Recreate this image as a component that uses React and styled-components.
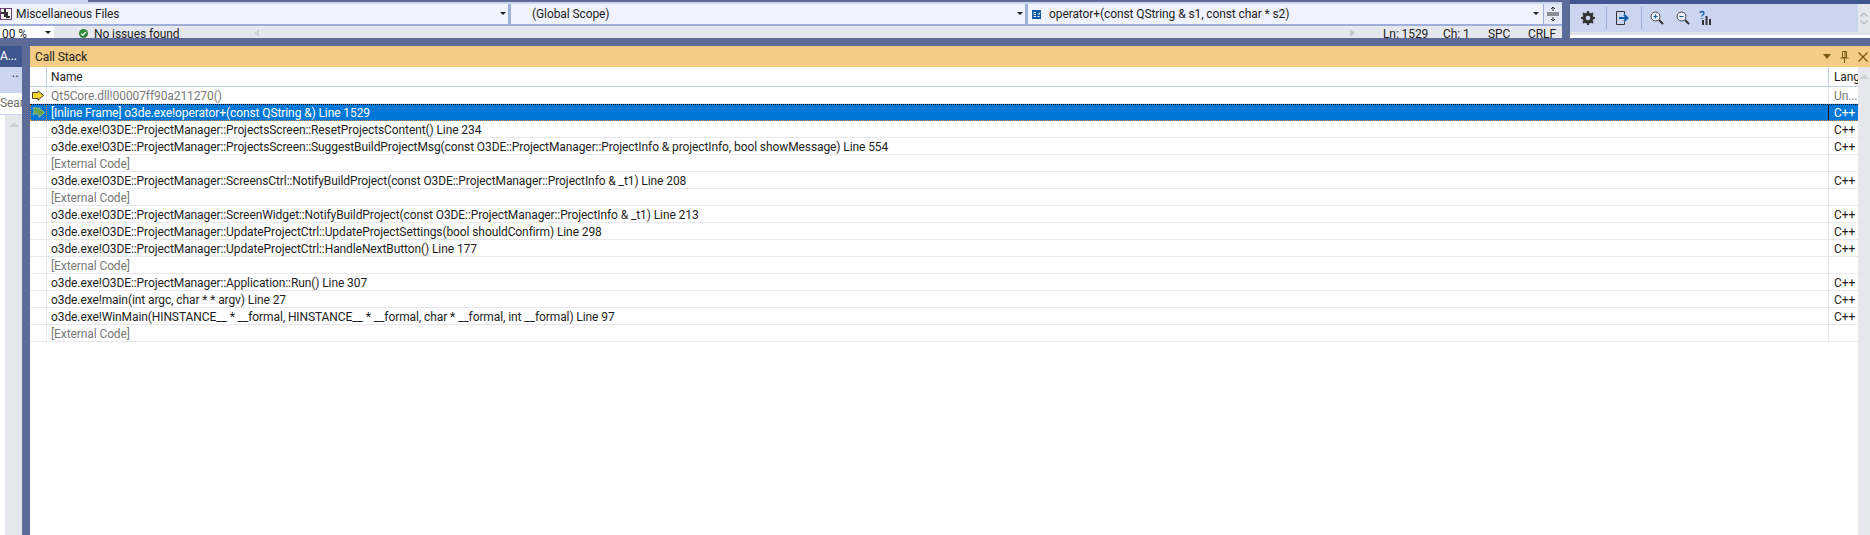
import React from 'react';
import styled, { createGlobalStyle } from 'styled-components';

const GlobalStyle = createGlobalStyle`
  html, body {
    margin: 0;
    padding: 0;
    width: 1870px;
    height: 535px;
    overflow: hidden;
    background: #5d6b99;
    font-family: Roboto, "Open Sans", sans-serif;
    font-size: 12px;
    letter-spacing: -0.095px;
    color: #1e1e1e;
  }
`;

const Page = styled.div`
  display: flex;
  flex-direction: column;
  width: 1870px;
  height: 535px;
`;

const Top = styled.div`
  display: flex;
  height: 38px;
  flex: none;
  background: #5d6b99;
`;

const EditorChrome = styled.div`
  width: 1562px;
  flex: none;
  display: flex;
  flex-direction: column;
`;

const TabStrip = styled.div`
  height: 2px;
  display: flex;
  flex: none;
`;

const ActiveTab = styled.div`
  width: 88px;
  background: #ccd5f0;
`;

const NavBar = styled.div`
  height: 24px;
  flex: none;
  box-sizing: border-box;
  background: #f0f3fd;
  border-top: 2px solid #ccd5f0;
  border-bottom: 2px solid #9fb0d8;
  display: flex;
`;

const NavCell = styled.div`
  width: ${p => p.$w}px;
  flex: none;
  display: flex;
  align-items: center;
  gap: ${p => p.$gap || 8}px;
  padding-left: ${p => p.$pad}px;
  box-sizing: border-box;
  position: relative;
  border-right: ${p => p.$rule || 3}px solid #9fb0d8;
`;

const Splitter = styled.div`
  flex: 1;
  display: flex;
  align-items: center;
  justify-content: center;
  background: #e4e9f8;
`;

const Arrow = styled.span`
  position: absolute;
  right: ${p => p.$right || 2}px;
  top: ${p => p.$top || 8}px;
  border-left: 3px solid transparent;
  border-right: 3px solid transparent;
  border-top: 3px solid #1e1e1e;
`;

const Status = styled.div`
  height: 12px;
  flex: none;
  background: #e6e7ec;
  display: flex;
  overflow: hidden;
  line-height: 16px;
`;

const ZoomBox = styled.div`
  width: 54px;
  background: #fff;
  position: relative;
  flex: none;
  padding-left: 2px;
  box-sizing: border-box;
`;

const Issues = styled.div`
  display: flex;
  gap: 6px;
  margin-left: 25px;
  width: 175px;
  flex: none;
  svg { margin-top: 3px; }
`;

const HBarLeft = styled.span`
  flex: none;
  margin-top: 3px;
  height: 0;
  border-top: 4px solid transparent;
  border-bottom: 4px solid transparent;
  border-right: 5px solid #d0d0d6;
`;

const HBarRight = styled.span`
  flex: none;
  margin: 3px 28px 0 1091px;
  height: 0;
  border-top: 4px solid transparent;
  border-bottom: 4px solid transparent;
  border-left: 5px solid #c4c4cc;
`;

const CaretInfo = styled.span`
  flex: none;
  width: ${p => p.$w}px;
`;

const RightToolbar = styled.div`
  width: 300px;
  margin-left: 8px;
  flex: none;
  display: flex;
  flex-direction: column;
`;

const ToolTop = styled.div`
  height: 4px;
  flex: none;
  background: #40568f;
`;

const ToolRow = styled.div`
  height: 28px;
  flex: none;
  background: #ccd5f0;
  display: flex;
  align-items: center;
  padding-left: 10px;
`;

const ToolIcon = styled.span`
  display: flex;
  flex: none;
  margin-right: ${p => p.$mr}px;
`;

const ToolSep = styled.div`
  width: 1px;
  height: 22px;
  flex: none;
  background: #9fb0d8;
  margin-right: ${p => p.$mr}px;
`;

const ToolScroll = styled.div`
  width: 12px;
  height: 28px;
  flex: none;
  margin-left: auto;
  background: #e6e7ec;
  display: flex;
  flex-direction: column;
  align-items: center;
  justify-content: center;
  gap: 3px;
`;

const ToolFoot = styled.div`
  height: 3px;
  flex: none;
  background: #e0e1e8;
`;

const ToolWhite = styled.div`
  flex: 1;
  background: #fff;
`;

const Main = styled.div`
  display: flex;
  flex: 1;
  padding-top: 8px;
  min-height: 0;
`;

const SidePanel = styled.div`
  width: 22px;
  flex: none;
  display: flex;
  flex-direction: column;
  background: #fff;
  overflow: hidden;
`;

const SideTitle = styled.div`
  height: 21px;
  flex: none;
  background: #40568f;
  color: #fff;
  line-height: 21px;
  position: relative;
`;

const SideTool = styled.div`
  height: 26px;
  flex: none;
  background: #ccd5f0;
  display: flex;
  justify-content: flex-end;
  padding: 7px 3px 0 0;
  box-sizing: border-box;
  font-size: 7px;
  line-height: 7px;
  letter-spacing: 1px;
`;

const SideSearch = styled.div`
  height: 22px;
  flex: none;
  line-height: 21px;
  color: #6d6d6d;
  background: #fff;
  border-bottom: 1px solid #ccd5f0;
  box-sizing: border-box;
  white-space: nowrap;
  overflow: hidden;
`;

const SideTrack = styled.div`
  flex: 1;
  background: #e6e7ec;
  margin-left: 5px;
  display: flex;
  justify-content: center;
  padding-top: 7px;
`;

const UpTri = styled.span`
  height: 0;
  border-left: 5px solid transparent;
  border-right: 5px solid transparent;
  border-bottom: 5px solid #cfd0d6;
`;

const Panel = styled.div`
  flex: 1;
  margin-left: 8px;
  display: flex;
  flex-direction: column;
  background: #fff;
  min-width: 0;
`;

const PanelHeader = styled.div`
  height: 21px;
  flex: none;
  background: #f5cc84;
  display: flex;
  align-items: center;
  padding: 0 0 0 5px;
  justify-content: space-between;
`;

const PanelButtons = styled.div`
  display: flex;
  align-items: center;
  gap: 9px;
  padding-right: 2px;
`;

const Body = styled.div`
  flex: 1;
  display: flex;
  min-height: 0;
`;

const Grid = styled.div`
  flex: 1;
  min-width: 0;
`;

const Scroll = styled.div`
  width: 12px;
  flex: none;
  background: #e6e7ec;
  display: flex;
  justify-content: center;
  padding-top: 7px;
  box-sizing: border-box;
`;

const Row = styled.div`
  display: grid;
  grid-template-columns: 17px 1fr 30px;
  height: ${p => (p.$head ? 20 : 17)}px;
  line-height: ${p => (p.$head ? 20 : 18)}px;
  box-sizing: border-box;
  border-bottom: 1px solid ${p => (p.$head ? '#c3cfe9' : '#e8e8ee')};
  color: ${p => (p.$dim ? '#7a7a7a' : '#1e1e1e')};
`;

const SelectedRow = styled(Row)`
  background: #0078d7;
  color: #fff;
  line-height: 16px;
  border-top: 1px dotted #111;
  border-bottom: 1px dotted #f08a24;
`;

const Gutter = styled.div`
  display: flex;
  align-items: center;
  justify-content: center;
  border-right: 1px solid ${p => (p.$head ? '#c3cfe9' : '#e8e8ee')};
  svg { flex: none; }
`;

const SelectedGutter = styled(Gutter)`
  border-left: 1px dotted #f08a24;
  border-right: 1px dotted #f08a24;
`;

const NameCell = styled.div`
  padding-left: 4px;
  white-space: nowrap;
  overflow: hidden;
`;

const LangCell = styled.div`
  padding-left: 5px;
  white-space: nowrap;
  overflow: hidden;
  border-left: 1px solid ${p => (p.$head ? '#c3cfe9' : '#e8e8ee')};
`;

const SelectedLang = styled(LangCell)`
  border-left-color: #111;
`;

const frames = [
  { name: 'Qt5Core.dll!00007ff90a211270()', lang: 'Un...', dim: true, mark: 'current' },
  { name: 'o3de.exe!O3DE::ProjectManager::ProjectsScreen::ResetProjectsContent() Line 234', lang: 'C++' },
  { name: 'o3de.exe!O3DE::ProjectManager::ProjectsScreen::SuggestBuildProjectMsg(const O3DE::ProjectManager::ProjectInfo & projectInfo, bool showMessage) Line 554', lang: 'C++' },
  { name: '[External Code]', dim: true },
  { name: 'o3de.exe!O3DE::ProjectManager::ScreensCtrl::NotifyBuildProject(const O3DE::ProjectManager::ProjectInfo & _t1) Line 208', lang: 'C++' },
  { name: '[External Code]', dim: true },
  { name: 'o3de.exe!O3DE::ProjectManager::ScreenWidget::NotifyBuildProject(const O3DE::ProjectManager::ProjectInfo & _t1) Line 213', lang: 'C++' },
  { name: 'o3de.exe!O3DE::ProjectManager::UpdateProjectCtrl::UpdateProjectSettings(bool shouldConfirm) Line 298', lang: 'C++' },
  { name: 'o3de.exe!O3DE::ProjectManager::UpdateProjectCtrl::HandleNextButton() Line 177', lang: 'C++' },
  { name: '[External Code]', dim: true },
  { name: 'o3de.exe!O3DE::ProjectManager::Application::Run() Line 307', lang: 'C++' },
  { name: 'o3de.exe!main(int argc, char * * argv) Line 27', lang: 'C++' },
  { name: 'o3de.exe!WinMain(HINSTANCE__ * __formal, HINSTANCE__ * __formal, char * __formal, int __formal) Line 97', lang: 'C++' },
  { name: '[External Code]', dim: true },
];

const CurrentArrow = () => (
  <svg width="12" height="11" viewBox="0 0 12 11">
    <path d="M.5 2.500h5.500V.7l5.500 4.800L6 10.300V8.500H.5z" fill="#f8d32f" stroke="#4a4430" />
  </svg>
);

const ReturnArrow = () => (
  <svg width="13" height="13" viewBox="0 0 13 13">
    <path d="M1 2c2.500-1 4.500-.5 6 1.500V1.500l5.500 5-5.500 5V9C5 7.500 3 7.500 1 9c1-2.500 1.500-5 0-7z" fill="#62a84a" stroke="#a9b8a8" strokeWidth="0.8" />
  </svg>
);

const MiscIcon = () => (
  <svg width="12" height="12" viewBox="0 0 12 12">
    <rect x="0.500" y="0.500" width="11" height="11" fill="#f6f6f6" stroke="#6a3d7c" />
    <path d="M1 4h3V1h2v3h2v2H6v3H4V6H1zM6 6h2v2h2v2H6z" fill="#333" />
  </svg>
);

const MemberIcon = () => (
  <svg width="9" height="9" viewBox="0 0 9 9">
    <rect width="9" height="9" fill="#0b5ba8" />
    <path d="M1.500 2.500h2.500M1.500 4.500h2.500M1.500 6.500h2.500M5.500 6.500h2M6 3.500l1 1 1-2" stroke="#fff" fill="none" />
  </svg>
);

const CheckIcon = () => (
  <svg width="9" height="9" viewBox="0 0 9 9">
    <circle cx="4.500" cy="4.500" r="4.500" fill="#2e8b3c" />
    <path d="M2.200 4.600l1.600 1.600 3-3.200" stroke="#fff" strokeWidth="1.300" fill="none" />
  </svg>
);

const SplitIcon = () => (
  <svg width="12" height="14" viewBox="0 0 12 14">
    <path d="M0 6h12M0 8h12M6 0v4M6 10v4M4 2l2-2 2 2M4 12l2 2 2-2" stroke="#333" fill="none" />
  </svg>
);

const GearIcon = () => (
  <svg width="16" height="16" viewBox="0 0 16 16">
    <path d="M8 2.500a5.500 5.500 0 1 0 0 11 5.500 5.500 0 0 0 0-11zm0 3.200a2.300 2.300 0 1 1 0 4.600 2.300 2.300 0 0 1 0-4.600z" fill="#333" fillRule="evenodd" />
    <path d="M8 1v3M8 12v3M1 8h3M12 8h3M3 3l2 2M11 11l2 2M3 13l2-2M11 5l2-2" stroke="#333" strokeWidth="2.200" />
  </svg>
);

const ExitIcon = () => (
  <svg width="16" height="16" viewBox="0 0 16 16">
    <path d="M9.500 4V1.500h-8v13h8V12" fill="none" stroke="#333" />
    <path d="M4 8h7M9 4.800 12.500 8 9 11.200" fill="none" stroke="#0b5ba8" strokeWidth="2" />
  </svg>
);

const GlassIcon = ({ plus }) => (
  <svg width="14" height="14" viewBox="0 0 14 14">
    <circle cx="5.500" cy="5.500" r="4.500" fill="#eef1fa" stroke="#444" />
    <path d="M3.500 5.500h4" stroke="#0b5ba8" />
    {plus && <path d="M5.500 3.500v4" stroke="#0b5ba8" />}
    <path d="M9 9l4 4" stroke="#333" strokeWidth="2" />
  </svg>
);

const StatsIcon = () => (
  <svg width="15" height="16" viewBox="0 0 15 16">
    <path d="M1 3c0-2 4-2 4 0 0 1.500-2 1.500-2 3.500M3 8v1" fill="none" stroke="#0b5ba8" strokeWidth="1.300" />
    <path d="M3 10h2v5H3zM6.500 6h2v9h-2zM10 9h2v6h-2z" fill="#333" />
  </svg>
);

const DropIcon = () => (
  <svg width="8" height="5" viewBox="0 0 8 5"><path d="M0 0h8L4 5z" fill="#7a5a10" /></svg>
);

const PinIcon = () => (
  <svg width="9" height="12" viewBox="0 0 9 12">
    <path d="M2.500 .5h4v6h-4zM.5 7h8M4.500 7v5M5 1v5" fill="none" stroke="#7a5a10" />
  </svg>
);

const CloseIcon = () => (
  <svg width="10" height="10" viewBox="0 0 10 10">
    <path d="M.5.5l9 9M9.500.5l-9 9" stroke="#7a5a10" strokeWidth="1.300" />
  </svg>
);

const ChevronIcon = ({ up }) => (
  <svg width="8" height="5" viewBox="0 0 8 5">
    <path d={up ? 'M.5 4.500 4 1l3.500 3.500' : 'M.5.5 4 4 7.500.5'} fill="none" stroke="#b8b8c0" strokeWidth="1.200" />
  </svg>
);

const FrameRow = ({ frame }) => (
  <Row $dim={frame.dim}>
    <Gutter>{frame.mark === 'current' && <CurrentArrow />}</Gutter>
    <NameCell>{frame.name}</NameCell>
    <LangCell>{frame.lang}</LangCell>
  </Row>
);

export default function App() {
  return (
    <Page>
      <GlobalStyle />
      <Top>
        <EditorChrome>
          <TabStrip><ActiveTab /></TabStrip>
          <NavBar>
            <NavCell $w={511} $pad={0} $gap={4}><MiscIcon />Miscellaneous Files<Arrow /></NavCell>
            <NavCell $w={517} $pad={21}>(Global Scope)<Arrow /></NavCell>
            <NavCell $w={516} $pad={4} $rule={1}><MemberIcon />operator+(const QString &amp; s1, const char * s2)<Arrow $right={4} /></NavCell>
            <Splitter><SplitIcon /></Splitter>
          </NavBar>
          <Status>
            <ZoomBox>00 %<Arrow $right={3} $top={5} /></ZoomBox>
            <Issues><CheckIcon />No issues found</Issues>
            <HBarLeft />
            <HBarRight />
            <CaretInfo $w={60}>Ln: 1529</CaretInfo>
            <CaretInfo $w={45}>Ch: 1</CaretInfo>
            <CaretInfo $w={40}>SPC</CaretInfo>
            <CaretInfo $w={34}>CRLF</CaretInfo>
          </Status>
        </EditorChrome>
        <RightToolbar>
          <ToolTop />
          <ToolRow>
            <ToolIcon $mr={10}><GearIcon /></ToolIcon>
            <ToolSep $mr={8} />
            <ToolIcon $mr={10}><ExitIcon /></ToolIcon>
            <ToolSep $mr={8} />
            <ToolIcon $mr={12}><GlassIcon plus /></ToolIcon>
            <ToolIcon $mr={9}><GlassIcon /></ToolIcon>
            <ToolIcon $mr={0}><StatsIcon /></ToolIcon>
            <ToolScroll><ChevronIcon up /><ChevronIcon /></ToolScroll>
          </ToolRow>
          <ToolFoot />
          <ToolWhite />
        </RightToolbar>
      </Top>
      <Main>
        <SidePanel>
          <SideTitle>A...</SideTitle>
          <SideTool>••</SideTool>
          <SideSearch>Search</SideSearch>
          <SideTrack><UpTri /></SideTrack>
        </SidePanel>
        <Panel>
          <PanelHeader>
            Call Stack
            <PanelButtons><DropIcon /><PinIcon /><CloseIcon /></PanelButtons>
          </PanelHeader>
          <Body>
            <Grid>
              <Row $head>
                <Gutter $head />
                <NameCell>Name</NameCell>
                <LangCell $head>Language</LangCell>
              </Row>
              <FrameRow frame={frames[0]} />
              <SelectedRow>
                <SelectedGutter><ReturnArrow /></SelectedGutter>
                <NameCell>{'[Inline Frame] o3de.exe!operator+(const QString &) Line 1529'}</NameCell>
                <SelectedLang>C++</SelectedLang>
              </SelectedRow>
              {frames.slice(1).map((f, i) => <FrameRow key={i} frame={f} />)}
            </Grid>
            <Scroll><UpTri /></Scroll>
          </Body>
        </Panel>
      </Main>
    </Page>
  );
}
